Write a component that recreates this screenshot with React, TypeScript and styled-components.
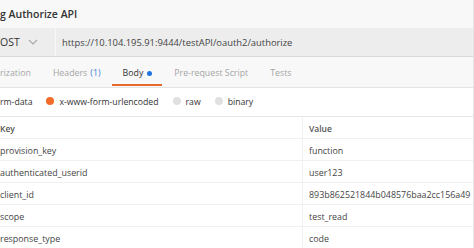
import React from 'react';
import styled, { createGlobalStyle } from 'styled-components';

const GlobalStyle = createGlobalStyle`
  html, body {
    margin: 0;
    padding: 0;
    background: #ffffff;
    font-family: 'Open Sans', 'Noto Sans', sans-serif;
    overflow: hidden;
  }
`;

const Page = styled.div`
  width: 474px;
  height: 248px;
  overflow: hidden;
  background: #fff;
  border-right: 1px solid #e6e6e6;
  box-sizing: border-box;
`;

const TitleBar = styled.div`
  height: 28px;
  display: flex;
  align-items: center;
  background: #f8f8f8;
  font-size: 10.5px;
  font-weight: 600;
  color: #333;
  white-space: nowrap;
`;

const UrlRow = styled.div`
  height: 28px;
  display: flex;
  background: #ededed;
  border-bottom: 1px solid #dadada;
`;

const Method = styled.div`
  width: 55px;
  display: flex;
  align-items: center;
  gap: 8px;
  font-size: 10.5px;
  color: #333;
  border-right: 1px solid #f7f7f7;
`;

const UrlText = styled.div`
  flex: 1;
  display: flex;
  align-items: center;
  padding-left: 6px;
  font-size: 9.4px;
  color: #444;
  white-space: nowrap;
`;

const TabBar = styled.div`
  height: 30px;
  display: flex;
  align-items: stretch;
  gap: 22px;
  background: #f8f8f8;
  border-bottom: 1px solid #e4e4e4;
`;

const Tab = styled.div<{ $active?: boolean }>`
  position: relative;
  display: flex;
  align-items: center;
  padding-top: 2px;
  font-size: 8.8px;
  color: ${(p) => (p.$active ? '#333' : '#a6a6a6')};
  white-space: nowrap;

  &::after {
    content: '';
    display: ${(p) => (p.$active ? 'block' : 'none')};
    position: absolute;
    left: -11px;
    right: -10px;
    bottom: 1px;
    height: 2px;
    background: #e8692e;
  }
`;

const Count = styled.span`
  color: #3b7dd8;
  margin-left: 3px;
`;

const Dot = styled.span`
  width: 5px;
  height: 5px;
  border-radius: 50%;
  background: #1f74e0;
  margin-left: 4px;
`;

const RadioRow = styled.div`
  height: 28px;
  display: flex;
  align-items: center;
  gap: 14px;
  font-size: 8.7px;
  color: #333;
  white-space: nowrap;
  border-bottom: 1px solid #e6e6e6;
`;

const RadioItem = styled.label`
  display: flex;
  align-items: center;
`;

const Radio = styled.span<{ $on?: boolean }>`
  width: 8px;
  height: 8px;
  border-radius: 50%;
  background: ${(p) => (p.$on ? '#f26b2a' : '#e0e0e0')};
  margin-right: 5px;
  margin-top: -3px;
`;

const Table = styled.div`
  display: grid;
  grid-template-columns: 302px 1fr;
`;

const Cell = styled.div<{ $head?: boolean; $value?: boolean }>`
  box-sizing: border-box;
  height: 22px;
  display: flex;
  align-items: center;
  padding-top: 1px;
  padding-left: ${(p) => (p.$value ? 6 : 0)}px;
  font-size: ${(p) => (p.$head ? 8.5 : 8.9)}px;
  font-weight: ${(p) => (p.$head ? 600 : 400)};
  color: ${(p) => (p.$head ? '#555' : '#444')};
  border-bottom: 1px solid #f0f0f0;
  border-left: ${(p) => (p.$value ? '1px solid #f0f0f0' : 'none')};
  white-space: nowrap;
`;

const ChevronIcon = () => (
  <svg width="10" height="6" viewBox="0 0 10 6" fill="none">
    <path d="M1 1l4 4 4-4" stroke="#a8a8a8" strokeWidth="1.1" />
  </svg>
);

const rows: [string, string][] = [
  ['provision_key', 'function'],
  ['authenticated_userid', 'user123'],
  ['client_id', '893b862521844b048576baa2cc156a49'],
  ['scope', 'test_read'],
  ['response_type', 'code'],
];

const App: React.FC = () => (
  <>
    <GlobalStyle />
    <Page>
      <TitleBar>g Authorize API</TitleBar>
      <UrlRow>
        <Method>
          OST
          <ChevronIcon />
        </Method>
        <UrlText>https://10.104.195.91:9444/testAPI/oauth2/authorize</UrlText>
      </UrlRow>
      <TabBar>
        <Tab>rization</Tab>
        <Tab>
          Headers<Count>(1)</Count>
        </Tab>
        <Tab $active>
          Body<Dot />
        </Tab>
        <Tab>Pre-request Script</Tab>
        <Tab>Tests</Tab>
      </TabBar>
      <RadioRow>
        <RadioItem>rm-data</RadioItem>
        <RadioItem>
          <Radio $on />
          x-www-form-urlencoded
        </RadioItem>
        <RadioItem>
          <Radio />
          raw
        </RadioItem>
        <RadioItem>
          <Radio />
          binary
        </RadioItem>
      </RadioRow>
      <Table>
        <Cell $head>Key</Cell>
        <Cell $head $value>Value</Cell>
        {rows.map(([k, v]) => (
          <React.Fragment key={k}>
            <Cell>{k}</Cell>
            <Cell $value>{v}</Cell>
          </React.Fragment>
        ))}
      </Table>
    </Page>
  </>
);

export default App;
